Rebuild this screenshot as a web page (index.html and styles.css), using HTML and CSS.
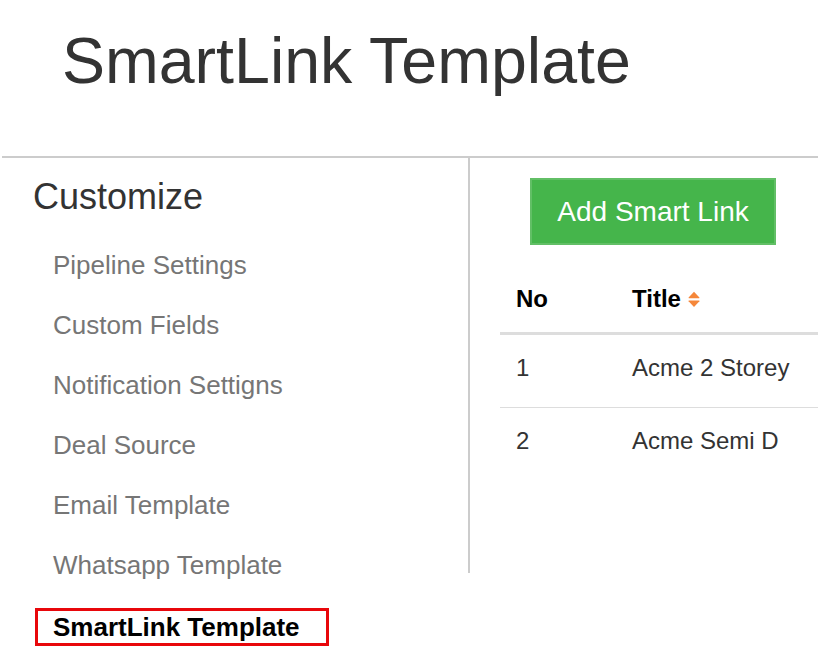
FILE: index.html
```html
<!DOCTYPE html>
<html lang="en">
<head>
<meta charset="utf-8">
<title>SmartLink Template</title>
<link rel="stylesheet" href="styles.css">
</head>
<body>
<header class="page-header">
  <h1 class="page-title">SmartLink Template</h1>
</header>
<main class="layout">
  <aside class="sidebar">
    <h2 class="sidebar-title">Customize</h2>
    <nav class="menu">
      <a class="menu-item" href="#">Pipeline Settings</a>
      <a class="menu-item" href="#">Custom Fields</a>
      <a class="menu-item" href="#">Notification Settigns</a>
      <a class="menu-item" href="#">Deal Source</a>
      <a class="menu-item" href="#">Email Template</a>
      <a class="menu-item" href="#">Whatsapp Template</a>
      <a class="menu-item active" href="#">SmartLink Template</a>
    </nav>
  </aside>
  <section class="content">
    <button class="btn-add" type="button">Add Smart Link</button>
    <table class="data-table">
      <thead>
        <tr>
          <th class="col-no">No</th>
          <th class="col-title">Title <svg class="sort-icon" width="12" height="17" viewBox="0 0 12 17" aria-hidden="true"><path d="M6 0.8 L11.4 6.6 Q11.8 7.3 11 7.3 L1 7.3 Q0.2 7.3 0.6 6.6 Z" fill="#f5873a"/><path d="M1 9.5 L11 9.5 Q11.8 9.5 11.4 10.2 L6 16 L0.6 10.2 Q0.2 9.5 1 9.5 Z" fill="#f5873a"/></svg></th>
        </tr>
      </thead>
      <tbody>
        <tr>
          <td class="col-no">1</td>
          <td class="col-title">Acme 2 Storey</td>
        </tr>
        <tr>
          <td class="col-no">2</td>
          <td class="col-title">Acme Semi D</td>
        </tr>
      </tbody>
    </table>
  </section>
</main>
</body>
</html>
```

FILE: styles.css
```css
html, body {
  margin: 0;
  padding: 0;
  background: #ffffff;
  overflow: hidden;
}

body {
  font-family: "Liberation Sans", Arial, Helvetica, sans-serif;
  color: #333333;
}

.page-header {
  padding: 23px 0 57px 62px;
}

.page-title {
  margin: 0;
  font-size: 64.5px;
  line-height: 76px;
  font-weight: 400;
  color: #333333;
}

.layout {
  display: flex;
  align-items: flex-start;
  margin-left: 2px;
  border-top: 2px solid #cccccc;
}

.sidebar {
  width: 466px;
  flex: none;
  padding-top: 19px;
}

.sidebar-title {
  margin: 0 0 18px 31px;
  font-size: 36px;
  line-height: 40px;
  font-weight: 400;
  color: #333333;
}

.menu {
  display: flex;
  flex-direction: column;
  align-items: flex-start;
  padding-left: 33px;
}

.menu-item {
  display: block;
  margin: 11px 0;
  padding: 0 26px 0 15px;
  border: 3px solid transparent;
  font-size: 26px;
  line-height: 32px;
  color: #767676;
  text-decoration: none;
  white-space: nowrap;
}

.menu-item.active {
  margin-top: 13px;
  border-color: #e8070b;
  color: #000000;
  font-weight: 700;
}

.content {
  box-sizing: border-box;
  flex: 1;
  min-height: 415px;
  border-left: 2px solid #cccccc;
  padding: 20px 0 0 30px;
}

.btn-add {
  display: block;
  margin: 0 0 25px 30px;
  width: 246px;
  height: 67px;
  padding: 0;
  border: 2px solid #62bf66;
  background: #45b54b;
  color: #ffffff;
  font-family: inherit;
  font-size: 28px;
  line-height: 63px;
  text-align: center;
  cursor: pointer;
}

.data-table {
  width: 100%;
  border-collapse: collapse;
  font-size: 24px;
}

.data-table th {
  padding: 12px 16px 16px;
  line-height: 34px;
  text-align: left;
  font-weight: 700;
  color: #000000;
  border-bottom: 3px solid #dddddd;
}

.data-table td {
  padding: 16px 16px 22px;
  line-height: 34px;
  color: #333333;
  border-bottom: 1px solid #dddddd;
}

.data-table tbody tr:last-child td {
  border-bottom: none;
}

.col-no {
  width: 84px;
}

.sort-icon {
  vertical-align: -1px;
}
```
